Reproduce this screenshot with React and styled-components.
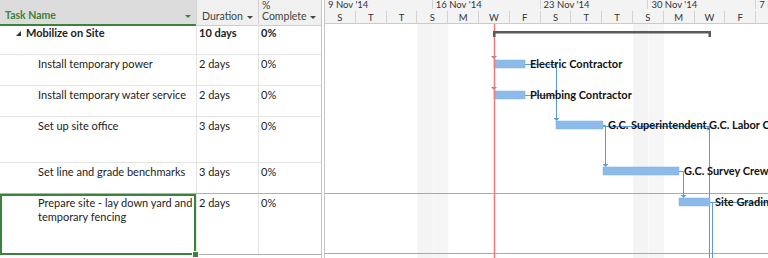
import styled, { createGlobalStyle } from 'styled-components';

const GlobalStyle = createGlobalStyle`
  body {
    margin: 0;
    font-family: Lato, "Noto Sans", sans-serif;
    background: #fff;
    overflow: hidden;
  }
`;

const GREEN = '#3e803e';
const DAY = 15.4;

const Screen = styled.div`
  display: flex;
  width: 768px;
  height: 258px;
  overflow: hidden;
`;

const TablePane = styled.div`
  width: 321px;
  flex: none;
  border-right: 1px solid #c6c6c6;
  display: flex;
  flex-direction: column;
`;

const Splitter = styled.div`
  width: 2px;
  flex: none;
`;

const ChartPane = styled.div`
  flex: 1;
  border-left: 1px solid #c6c6c6;
  display: flex;
  flex-direction: column;
  min-width: 0;
  overflow: hidden;
`;

const HeaderRow = styled.div`
  display: grid;
  grid-template-columns: 197px 62px 62px;
  height: 24px;
  flex: none;
`;

const HeadCell = styled.div`
  display: flex;
  align-items: flex-end;
  justify-content: space-between;
  padding: 0 5px 3px ${p => p.$pad || 5}px;
  font-size: 10.5px;
  line-height: 11px;
  color: ${p => (p.$active ? GREEN : '#444')};
  font-weight: ${p => (p.$active ? 700 : 400)};
  background: ${p => (p.$active ? '#dcdcdc' : '#f0f0f0')};
  border-right: ${p => (p.$last ? 'none' : '1px solid #d2d2d2')};
  border-bottom: ${p => (p.$active ? `2px solid ${GREEN}` : '1px solid #cfcfcf')};
  box-sizing: border-box;
`;

const Caret = styled.span`
  width: 0;
  height: 0;
  border-left: 3px solid transparent;
  border-right: 3px solid transparent;
  border-top: 3px solid ${p => p.$color || '#444'};
  margin-bottom: 3px;
`;

const Row = styled.div`
  display: grid;
  grid-template-columns: 197px 62px 62px;
  height: ${p => p.$h}px;
  flex: none;
  border-bottom: 1px solid ${p => (p.$page ? '#b0b0b0' : '#e4e4e4')};
  box-sizing: border-box;
`;

const Cell = styled.div`
  position: relative;
  padding: 2px 0 0 ${p => p.$indent || 2}px;
  font-size: 11px;
  line-height: 13.5px;
  color: #222;
  font-weight: ${p => (p.$bold ? 700 : 400)};
  border-right: ${p => (p.$last ? 'none' : '1px solid #e4e4e4')};
  box-sizing: border-box;
  display: flex;
  align-items: flex-start;
  gap: 5px;
  ${p => p.$selected && `
    box-shadow: inset 0 0 0 2px ${GREEN};
    margin-bottom: -1px;
    &::after {
      content: '';
      position: absolute;
      right: -3px;
      bottom: -3px;
      width: 5px;
      height: 5px;
      background: ${GREEN};
      border: 1px solid #fff;
    }
  `}
`;

const Collapse = styled.span`
  width: 0;
  height: 0;
  margin-top: 5px;
  border-left: 5px solid transparent;
  border-bottom: 5px solid #333;
`;

const Timescale = styled.div`
  height: 24px;
  flex: none;
  background: #f3f3f3;
  border-bottom: 1px solid #cbcbcb;
  box-sizing: border-box;
  display: flex;
  flex-direction: column;
  font-size: 9.5px;
  color: #333;
`;

const Tier = styled.div`
  display: flex;
  height: ${p => p.$h}px;
  white-space: nowrap;
`;

const Week = styled.div`
  flex: none;
  width: ${DAY * 7}px;
  padding: 0 0 0 3px;
  box-sizing: border-box;
  border-right: 1px solid #d3d3d3;
  line-height: 9px;
  height: 9px;
`;

const Unit = styled.div`
  flex: none;
  width: ${DAY * 2}px;
  box-sizing: border-box;
  border-right: 1px solid #d3d3d3;
  text-align: center;
  line-height: 14px;
  margin-top: 1px;
`;

const ChartBody = styled.svg`
  display: block;
  flex: 1;
`;

const BarLabel = styled.text`
  font-family: Lato, "Noto Sans", sans-serif;
  font-size: 11px;
  font-weight: 700;
  fill: #111;
`;

const tasks = [
  { name: 'Mobilize on Site', dur: '10 days', pct: '0%', h: 31, summary: true },
  { name: 'Install temporary power', dur: '2 days', pct: '0%', h: 31 },
  { name: 'Install temporary water service', dur: '2 days', pct: '0%', h: 31 },
  { name: 'Set up site office', dur: '3 days', pct: '0%', h: 46 },
  { name: 'Set line and grade benchmarks', dur: '3 days', pct: '0%', h: 31, page: true },
  { name: 'Prepare site - lay down yard and temporary fencing', dur: '2 days', pct: '0%', h: 61, page: true, selected: true },
];

const weeks = ["9 Nov '14", "16 Nov '14", "23 Nov '14", "30 Nov '14", "7 Dec '14"];
const units = ['S', 'T', 'T', 'S', 'M', 'W', 'F', 'S', 'T', 'T', 'S', 'M', 'W', 'F', 'S'];

const bars = [
  { x: 169, w: 31, y: 36, label: 'Electric Contractor' },
  { x: 169, w: 31, y: 67, label: 'Plumbing Contractor' },
  { x: 231, w: 47, y: 97, label: 'G.C. Superintendent,G.C. Labor Crew' },
  { x: 278, w: 76, y: 143, label: 'G.C. Survey Crew' },
  { x: 354, w: 31, y: 174, label: 'Site Grading Contractor' },
];

const arrow = (x, y) => `${x - 3},${y - 3} ${x + 3},${y - 3} ${x},${y}`;

function Chart() {
  const link = '#5b9bdc';
  return (
    <ChartBody width="443" height="234">
      <rect x={DAY * 6} y="0" width={DAY} height="234" fill="#f4f4f4" />
      <rect x={DAY * 7 + 0.6} y="0" width={DAY - 0.6} height="234" fill="#f6f6f6" />
      <rect x={DAY * 20} y="0" width={DAY} height="234" fill="#f4f4f4" />
      <rect x={DAY * 21 + 0.6} y="0" width={DAY - 0.6} height="234" fill="#f6f6f6" />
      <line x1="0" x2="443" y1="169.5" y2="169.5" stroke="#a9a9a9" />
      <line x1="0" x2="443" y1="229.5" y2="229.5" stroke="#a9a9a9" />

      <g stroke={link} fill="none" strokeWidth="1">
        <path d="M200 40.5 H231.5 V94" />
        <path d="M200 71.5 H231.5" />
        <path d="M278 101.5 H280.5 V140" />
        <path d="M278 102.5 H384.5 V234" />
        <path d="M354 147.5 H358.5 V171" />
        <path d="M385 178.5 H443" />
        <path d="M387.5 178 V234" />
      </g>
      <g fill={link}>
        <polygon points={arrow(169, 35)} />
        <polygon points={arrow(169, 66)} />
        <polygon points={arrow(231.5, 97)} />
        <polygon points={arrow(280.5, 143)} />
        <polygon points={arrow(358.5, 174)} />
      </g>

      {bars.map(b => (
        <g key={b.label}>
          <rect x={b.x} y={b.y} width={b.w} height="8" fill="#8cbbea" stroke="#7fb0e2" strokeWidth="0.5" />
          <BarLabel x={b.x + b.w + 5} y={b.y + 8}>{b.label}</BarLabel>
        </g>
      ))}

      <line x1="169.5" x2="169.5" y1="0" y2="234" stroke="#f27878" strokeWidth="1.5" />
      <path d="M168 7 H386 V13 H383.5 V9.5 H170.5 V13 H168 Z" fill="#5a5a5a" />
    </ChartBody>
  );
}

export default function App() {
  return (
    <>
      <GlobalStyle />
      <Screen>
        <TablePane>
          <HeaderRow>
            <HeadCell $active>
              <span>Task Name</span>
              <Caret $color={GREEN} />
            </HeadCell>
            <HeadCell $pad={5}>
              <span>Duration</span>
              <Caret />
            </HeadCell>
            <HeadCell $last $pad={3}>
              <span>%<br />Complete</span>
              <Caret />
            </HeadCell>
          </HeaderRow>
          {tasks.map(t => (
            <Row key={t.name} $h={t.h} $page={t.page}>
              <Cell $bold={t.summary} $indent={t.summary ? 16 : 38} $selected={t.selected}>
                {t.summary && <Collapse />}
                <span>{t.name}</span>
              </Cell>
              <Cell $bold={t.summary}>{t.dur}</Cell>
              <Cell $bold={t.summary} $last>{t.pct}</Cell>
            </Row>
          ))}
        </TablePane>
        <Splitter />
        <ChartPane>
          <Timescale>
            <Tier $h={10}>
              {weeks.map(w => <Week key={w}>{w}</Week>)}
            </Tier>
            <Tier $h={13}>
              {units.map((u, i) => <Unit key={i}>{u}</Unit>)}
            </Tier>
          </Timescale>
          <Chart />
        </ChartPane>
      </Screen>
    </>
  );
}
